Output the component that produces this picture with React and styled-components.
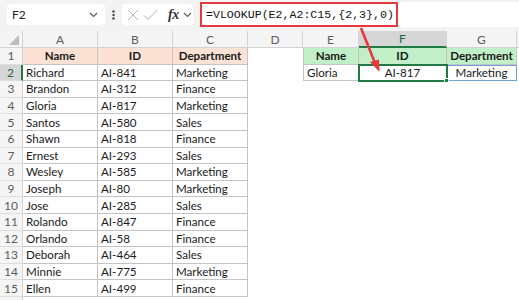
import React from 'react';
import styled, { createGlobalStyle, css } from 'styled-components';

const GlobalStyle = createGlobalStyle`
  html, body {
    margin: 0;
    padding: 0;
    background: #ffffff;
    overflow: hidden;
  }
  * {
    box-sizing: border-box;
  }
`;

const Page = styled.div`
  position: relative;
  width: 519px;
  height: 300px;
  overflow: hidden;
  font-family: Lato, 'Liberation Sans', sans-serif;
  background: #ffffff;
`;

const Toolbar = styled.div`
  height: 31px;
  display: flex;
  align-items: flex-start;
  background: #f3f3f3;
  padding-top: 4px;
  padding-left: 7px;
`;

const NameBox = styled.div`
  width: 98px;
  height: 21px;
  background: #ffffff;
  border-radius: 4px;
  display: flex;
  align-items: center;
  justify-content: space-between;
  padding: 0 7px 0 5px;
  font-size: 12px;
  color: #222;
`;

const Dots = styled.div`
  width: 17px;
  height: 21px;
  display: flex;
  align-items: center;
  justify-content: center;
`;

const FxBox = styled.div`
  width: 71px;
  height: 21px;
  background: #ffffff;
  border-radius: 4px;
  display: flex;
  align-items: center;
  padding-left: 5px;
  gap: 4px;
`;

const FxLabel = styled.span`
  font-family: 'Liberation Serif', serif;
  font-style: italic;
  font-weight: bold;
  font-size: 14px;
  color: #333;
  margin-left: 6px;
  letter-spacing: -0.5px;
`;

const FormulaBar = styled.div`
  flex: 1;
  margin-left: 7px;
  margin-top: -2px;
  height: 25px;
  background: #ffffff;
  display: flex;
  align-items: center;
`;

const FormulaFrame = styled.div`
  width: 198px;
  height: 25px;
  border: 2px solid #e5393d;
  display: flex;
  align-items: center;
  padding-left: 4px;
  font-family: 'Liberation Mono', monospace;
  font-size: 11.6px;
  color: #111;
  white-space: nowrap;
`;

const Sheet = styled.div`
  display: grid;
  grid-template-columns: 23px 75px 75px 75px 55px 56px 88px 70px 1fr;
  grid-template-rows: 17px repeat(16, 16.6px);
`;

const ColHead = styled.div`
  background: ${({ $active }) => ($active ? '#d6d6d6' : '#f5f5f5')};
  border-right: 1px solid #d4d4d4;
  border-bottom: ${({ $active }) => ($active ? '2px solid #1f7a45' : '1px solid #d4d4d4')};
  color: ${({ $active }) => ($active ? '#1b6b3c' : '#5c5c5c')};
  font-size: 12px;
  display: flex;
  align-items: center;
  justify-content: center;
  position: relative;
`;

const Corner = styled(ColHead)`
  justify-content: flex-end;
  align-items: flex-end;
  padding: 0 3px 2px 0;
`;

const RowHead = styled.div`
  background: ${({ $active }) => ($active ? '#d6d6d6' : '#f5f5f5')};
  border-right: ${({ $active }) => ($active ? '2px solid #1f7a45' : '1px solid #d4d4d4')};
  border-bottom: 1px solid #dedede;
  color: ${({ $active }) => ($active ? '#1b6b3c' : '#5c5c5c')};
  font-size: 12px;
  display: flex;
  align-items: center;
  justify-content: center;
`;

const Cell = styled.div`
  position: relative;
  font-size: 11.6px;
  color: #1a1a1a;
  display: flex;
  align-items: center;
  padding: 0 3px;
  white-space: nowrap;
  background: ${({ $bg }) => $bg || 'transparent'};
  justify-content: ${({ $center }) => ($center ? 'center' : 'flex-start')};
  font-weight: ${({ $bold }) => ($bold ? 700 : 400)};
  ${({ $boxed }) =>
    $boxed &&
    css`
      border-right: 1px solid #c4c4c4;
      border-bottom: 1px solid #c4c4c4;
    `}
  ${({ $leftEdge }) =>
    $leftEdge &&
    css`
      border-left: 1px solid #c4c4c4;
    `}
  ${({ $selected }) =>
    $selected &&
    css`
      outline: 2px solid #1f7a45;
      outline-offset: -1px;
      z-index: 2;
    `}
  ${({ $spill }) =>
    $spill &&
    css`
      outline: 1px solid #6d9fd8;
      outline-offset: -1px;
      z-index: 1;
    `}
`;

const FillHandle = styled.span`
  position: absolute;
  right: -3px;
  bottom: -3px;
  width: 5px;
  height: 5px;
  background: #1f7a45;
  border: 1px solid #ffffff;
`;

const Overlay = styled.svg`
  position: absolute;
  left: 0;
  top: 0;
  pointer-events: none;
  z-index: 5;
`;

const Chevron = () => (
  <svg width="9" height="6" viewBox="0 0 9 6">
    <path d="M1 1 L4.5 4.5 L8 1" fill="none" stroke="#555" strokeWidth="1.1" />
  </svg>
);

const people = [
  ['Richard', 'AI-841', 'Marketing'],
  ['Brandon', 'AI-312', 'Finance'],
  ['Gloria', 'AI-817', 'Marketing'],
  ['Santos', 'AI-580', 'Sales'],
  ['Shawn', 'AI-818', 'Finance'],
  ['Ernest', 'AI-293', 'Sales'],
  ['Wesley', 'AI-585', 'Marketing'],
  ['Joseph', 'AI-80', 'Marketing'],
  ['Jose', 'AI-285', 'Sales'],
  ['Rolando', 'AI-847', 'Finance'],
  ['Orlando', 'AI-58', 'Finance'],
  ['Deborah', 'AI-464', 'Sales'],
  ['Minnie', 'AI-775', 'Marketing'],
  ['Ellen', 'AI-499', 'Finance'],
];

const letters = ['A', 'B', 'C', 'D', 'E', 'F', 'G', ''];
const PEACH = '#fbe2d5';
const GREEN = '#c1f0c8';

const App = () => {
  const rows = [];

  // row 1: headers of both tables
  rows.push(
    <React.Fragment key="r1">
      <RowHead>1</RowHead>
      <Cell $boxed $bold $center $bg={PEACH}>Name</Cell>
      <Cell $boxed $bold $center $bg={PEACH}>ID</Cell>
      <Cell $boxed $bold $center $bg={PEACH}>Department</Cell>
      <Cell />
      <Cell $boxed $leftEdge $bold $center $bg={GREEN}>Name</Cell>
      <Cell $boxed $bold $center $bg={GREEN}>ID</Cell>
      <Cell $boxed $bold $center $bg={GREEN}>Department</Cell>
      <Cell />
    </React.Fragment>
  );

  people.forEach(([name, id, dept], i) => {
    const n = i + 2;
    rows.push(
      <React.Fragment key={name}>
        <RowHead $active={n === 2}>{n}</RowHead>
        <Cell $boxed>{name}</Cell>
        <Cell $boxed>{id}</Cell>
        <Cell $boxed>{dept}</Cell>
        <Cell />
        {n === 2 ? (
          <>
            <Cell $boxed $leftEdge>Gloria</Cell>
            <Cell $boxed $center $selected>
              AI-817
              <FillHandle />
            </Cell>
            <Cell $boxed $center $spill>Marketing</Cell>
          </>
        ) : (
          <>
            <Cell />
            <Cell />
            <Cell />
          </>
        )}
        <Cell />
      </React.Fragment>
    );
  });

  // row 16 only peeks in at the bottom edge
  rows.push(
    <React.Fragment key="r16">
      <RowHead />
      {letters.map((l, i) => <Cell key={i} />)}
    </React.Fragment>
  );

  return (
    <Page>
      <GlobalStyle />
      <Toolbar>
        <NameBox>
          <span>F2</span>
          <Chevron />
        </NameBox>
        <Dots>
          <svg width="3" height="10" viewBox="0 0 3 10">
            <circle cx="1.5" cy="1.5" r="1.2" fill="#444" />
            <circle cx="1.5" cy="5" r="1.2" fill="#444" />
            <circle cx="1.5" cy="8.5" r="1.2" fill="#444" />
          </svg>
        </Dots>
        <FxBox>
          <svg width="12" height="12" viewBox="0 0 12 12">
            <path d="M1 1 L11 11 M11 1 L1 11" stroke="#b5b5b5" strokeWidth="1" fill="none" />
          </svg>
          <svg width="15" height="12" viewBox="0 0 15 12">
            <path d="M1 6.5 L5 10.5 L14 1" stroke="#b5b5b5" strokeWidth="1" fill="none" />
          </svg>
          <FxLabel>fx</FxLabel>
          <Chevron />
        </FxBox>
        <FormulaBar>
          <FormulaFrame>=VLOOKUP(E2,A2:C15,{'{'}2,3{'}'},0)</FormulaFrame>
        </FormulaBar>
      </Toolbar>
      <Sheet>
        <Corner>
          <svg width="10" height="10" viewBox="0 0 10 10">
            <path d="M10 0 L10 10 L0 10 Z" fill="#bdbdbd" />
          </svg>
        </Corner>
        {letters.map((l, i) => (
          <ColHead key={i} $active={l === 'F'}>{l}</ColHead>
        ))}
        {rows}
      </Sheet>
      <Overlay width="519" height="300" viewBox="0 0 519 300">
        <line x1="361" y1="28" x2="375" y2="63" stroke="#e5393d" strokeWidth="2.6" />
        <path d="M379.5 72 L370 62 L379 59.5 Z" fill="#e5393d" />
      </Overlay>
    </Page>
  );
};

export default App;
